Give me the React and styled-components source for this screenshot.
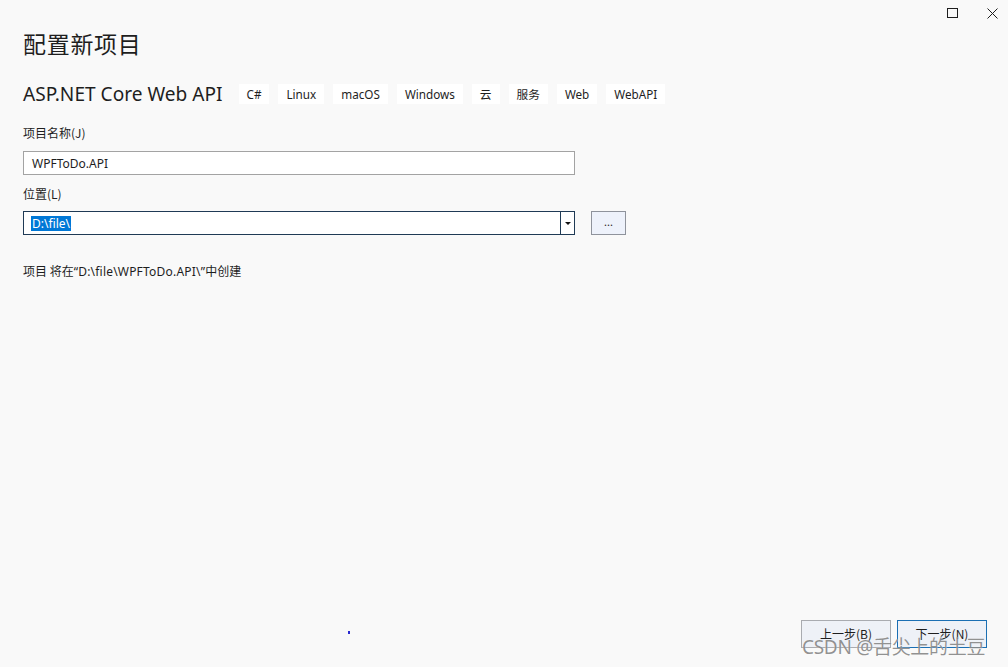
import React from "react";
import styled, { createGlobalStyle } from "styled-components";

const Global = createGlobalStyle`
  html, body { margin: 0; padding: 0; background: #f9f9f9; }
  body { font-family: "Noto Sans", "Noto Sans CJK SC", sans-serif; color: #1e1e1e; }
`;

const Page = styled.div`
  position: relative;
  height: 667px;
  box-sizing: border-box;
  padding: 0 21px 19px 23px;
  display: flex;
  flex-direction: column;
  background: #f9f9f9;
  overflow: hidden;
`;

const TitleBar = styled.div`
  height: 28px;
  display: flex;
  justify-content: flex-end;
  align-items: flex-start;
  gap: 8px;
  margin-right: -21px;
`;

const WinButton = styled.div`
  width: 32px;
  height: 26px;
  display: flex;
  align-items: center;
  justify-content: center;
  color: #1e1e1e;
`;

const Title = styled.h1`
  margin: 0;
  font-family: "Noto Sans CJK SC", sans-serif;
  font-weight: 400;
  font-size: 23px;
  line-height: 30px;
  color: #1e1e1e;
  letter-spacing: 0.7px;
`;

const SubRow = styled.div`
  margin-top: 25px;
  display: flex;
  align-items: center;
  height: 22px;
`;

const SubTitle = styled.div`
  font-family: "Noto Sans", "Noto Sans CJK SC", sans-serif;
  font-size: 19.1px;
  line-height: 22px;
  color: #1e1e1e;
  margin-right: 16px;
`;

const Tags = styled.div`
  display: flex;
  gap: 9px;
`;

const Tag = styled.span`
  background: #ffffff;
  height: 20px;
  line-height: 20px;
  padding: 0 8px;
  font-size: 11.7px;
  color: #1e1e1e;
  font-family: "Noto Sans", "Noto Sans CJK SC", sans-serif;
`;

const Label = styled.div`
  font-size: 12px;
  line-height: 16px;
  color: #1e1e1e;
  margin-top: ${(p) => p.$mt}px;
  font-family: "Noto Sans CJK SC", sans-serif;
`;

const TextBox = styled.div`
  box-sizing: border-box;
  width: 552px;
  height: 24px;
  margin-top: ${(p) => p.$mt}px;
  border: 1px solid ${(p) => (p.$focused ? "#1f3a55" : "#a3a3a3")};
  background: #ffffff;
  display: flex;
  align-items: center;
  padding-left: ${(p) => (p.$focused ? 7 : 8)}px;
  font-size: 12px;
  font-family: "Noto Sans", sans-serif;
  color: #1e1e1e;
`;

const ComboRow = styled.div`
  display: flex;
  align-items: center;
  margin-top: 9px;
  gap: 16px;
`;

const Combo = styled(TextBox)`
  margin-top: 0;
  padding-right: 0;
  justify-content: space-between;
`;

const Selected = styled.span`
  background: #0078d7;
  color: #ffffff;
  padding: 1px 1px;
  line-height: 13px;
`;

const DropArrow = styled.div`
  width: 13px;
  height: 100%;
  border-left: 1px solid #1f3a55;
  display: flex;
  align-items: center;
  justify-content: center;
  &::after {
    content: "";
    border-left: 3px solid transparent;
    border-right: 3px solid transparent;
    border-top: 3px solid #111;
  }
`;

const Browse = styled.div`
  box-sizing: border-box;
  width: 35px;
  height: 24px;
  background: #eef2fb;
  border: 1px solid #8f939c;
  display: flex;
  align-items: center;
  justify-content: center;
  font-size: 11px;
  color: #1e1e1e;
  padding-bottom: 3px;
`;

const Info = styled.div`
  margin-top: 28px;
  font-size: 12px;
  line-height: 16px;
  color: #1e1e1e;
  font-family: "Noto Sans CJK SC", sans-serif;
`;

const Latin = styled.span`
  font-family: "Noto Sans", sans-serif;
  letter-spacing: 0.2px;
`;

const Footer = styled.div`
  margin-top: auto;
  display: flex;
  justify-content: flex-end;
  gap: 6px;
`;

const Button = styled.div`
  box-sizing: border-box;
  width: 90px;
  height: 28px;
  background: #eef1f7;
  border: 1px solid ${(p) => (p.$primary ? "#1b6fb3" : "#a9abb0")};
  display: flex;
  align-items: center;
  justify-content: center;
  font-size: 12px;
  font-family: "Noto Sans CJK SC", sans-serif;
  color: #1e1e1e;
  padding-bottom: 2px;
`;

const Watermark = styled.div`
  position: absolute;
  left: 802px;
  top: 634px;
  font-family: "Noto Sans", "Noto Sans CJK SC", sans-serif;
  font-size: 19px;
  line-height: 26px;
  color: rgba(110, 110, 110, 0.75);
  white-space: nowrap;
  letter-spacing: -0.3px;
  text-shadow: 0 0 1px rgba(255, 255, 255, 0.8);
`;

const Dot = styled.div`
  position: absolute;
  left: 348px;
  top: 631px;
  width: 2px;
  height: 3px;
  background: #2a2ad0;
`;

export default function App() {
  const tags = ["C#", "Linux", "macOS", "Windows", "云", "服务", "Web", "WebAPI"];
  return (
    <>
      <Global />
      <Page>
        <TitleBar>
          <WinButton>
            <svg width="11" height="11" viewBox="0 0 11 11">
              <rect x="0.5" y="0.5" width="10" height="9" fill="none" stroke="#1e1e1e" strokeWidth="1" />
            </svg>
          </WinButton>
          <WinButton>
            <svg width="11" height="11" viewBox="0 0 11 11">
              <path d="M0.5 0.5 L10.5 10.5 M10.5 0.5 L0.5 10.5" stroke="#1e1e1e" strokeWidth="1" fill="none" />
            </svg>
          </WinButton>
        </TitleBar>
        <Title>配置新项目</Title>
        <SubRow>
          <SubTitle>ASP.NET Core Web API</SubTitle>
          <Tags>
            {tags.map((t) => (
              <Tag key={t}>{t}</Tag>
            ))}
          </Tags>
        </SubRow>
        <Label $mt={20}>项目名称(J)</Label>
        <TextBox $mt={10}>WPFToDo.API</TextBox>
        <Label $mt={11}>位置(L)</Label>
        <ComboRow>
          <Combo $focused>
            <Selected>D:\file\</Selected>
            <DropArrow />
          </Combo>
          <Browse>...</Browse>
        </ComboRow>
        <Info>
          项目 将在<Latin>“D:\file\WPFToDo.API\”</Latin>中创建
        </Info>
        <Footer>
          <Button>上一步(B)</Button>
          <Button $primary>下一步(N)</Button>
        </Footer>
        <Dot />
        <Watermark>CSDN @舌尖上的土豆</Watermark>
      </Page>
    </>
  );
}
